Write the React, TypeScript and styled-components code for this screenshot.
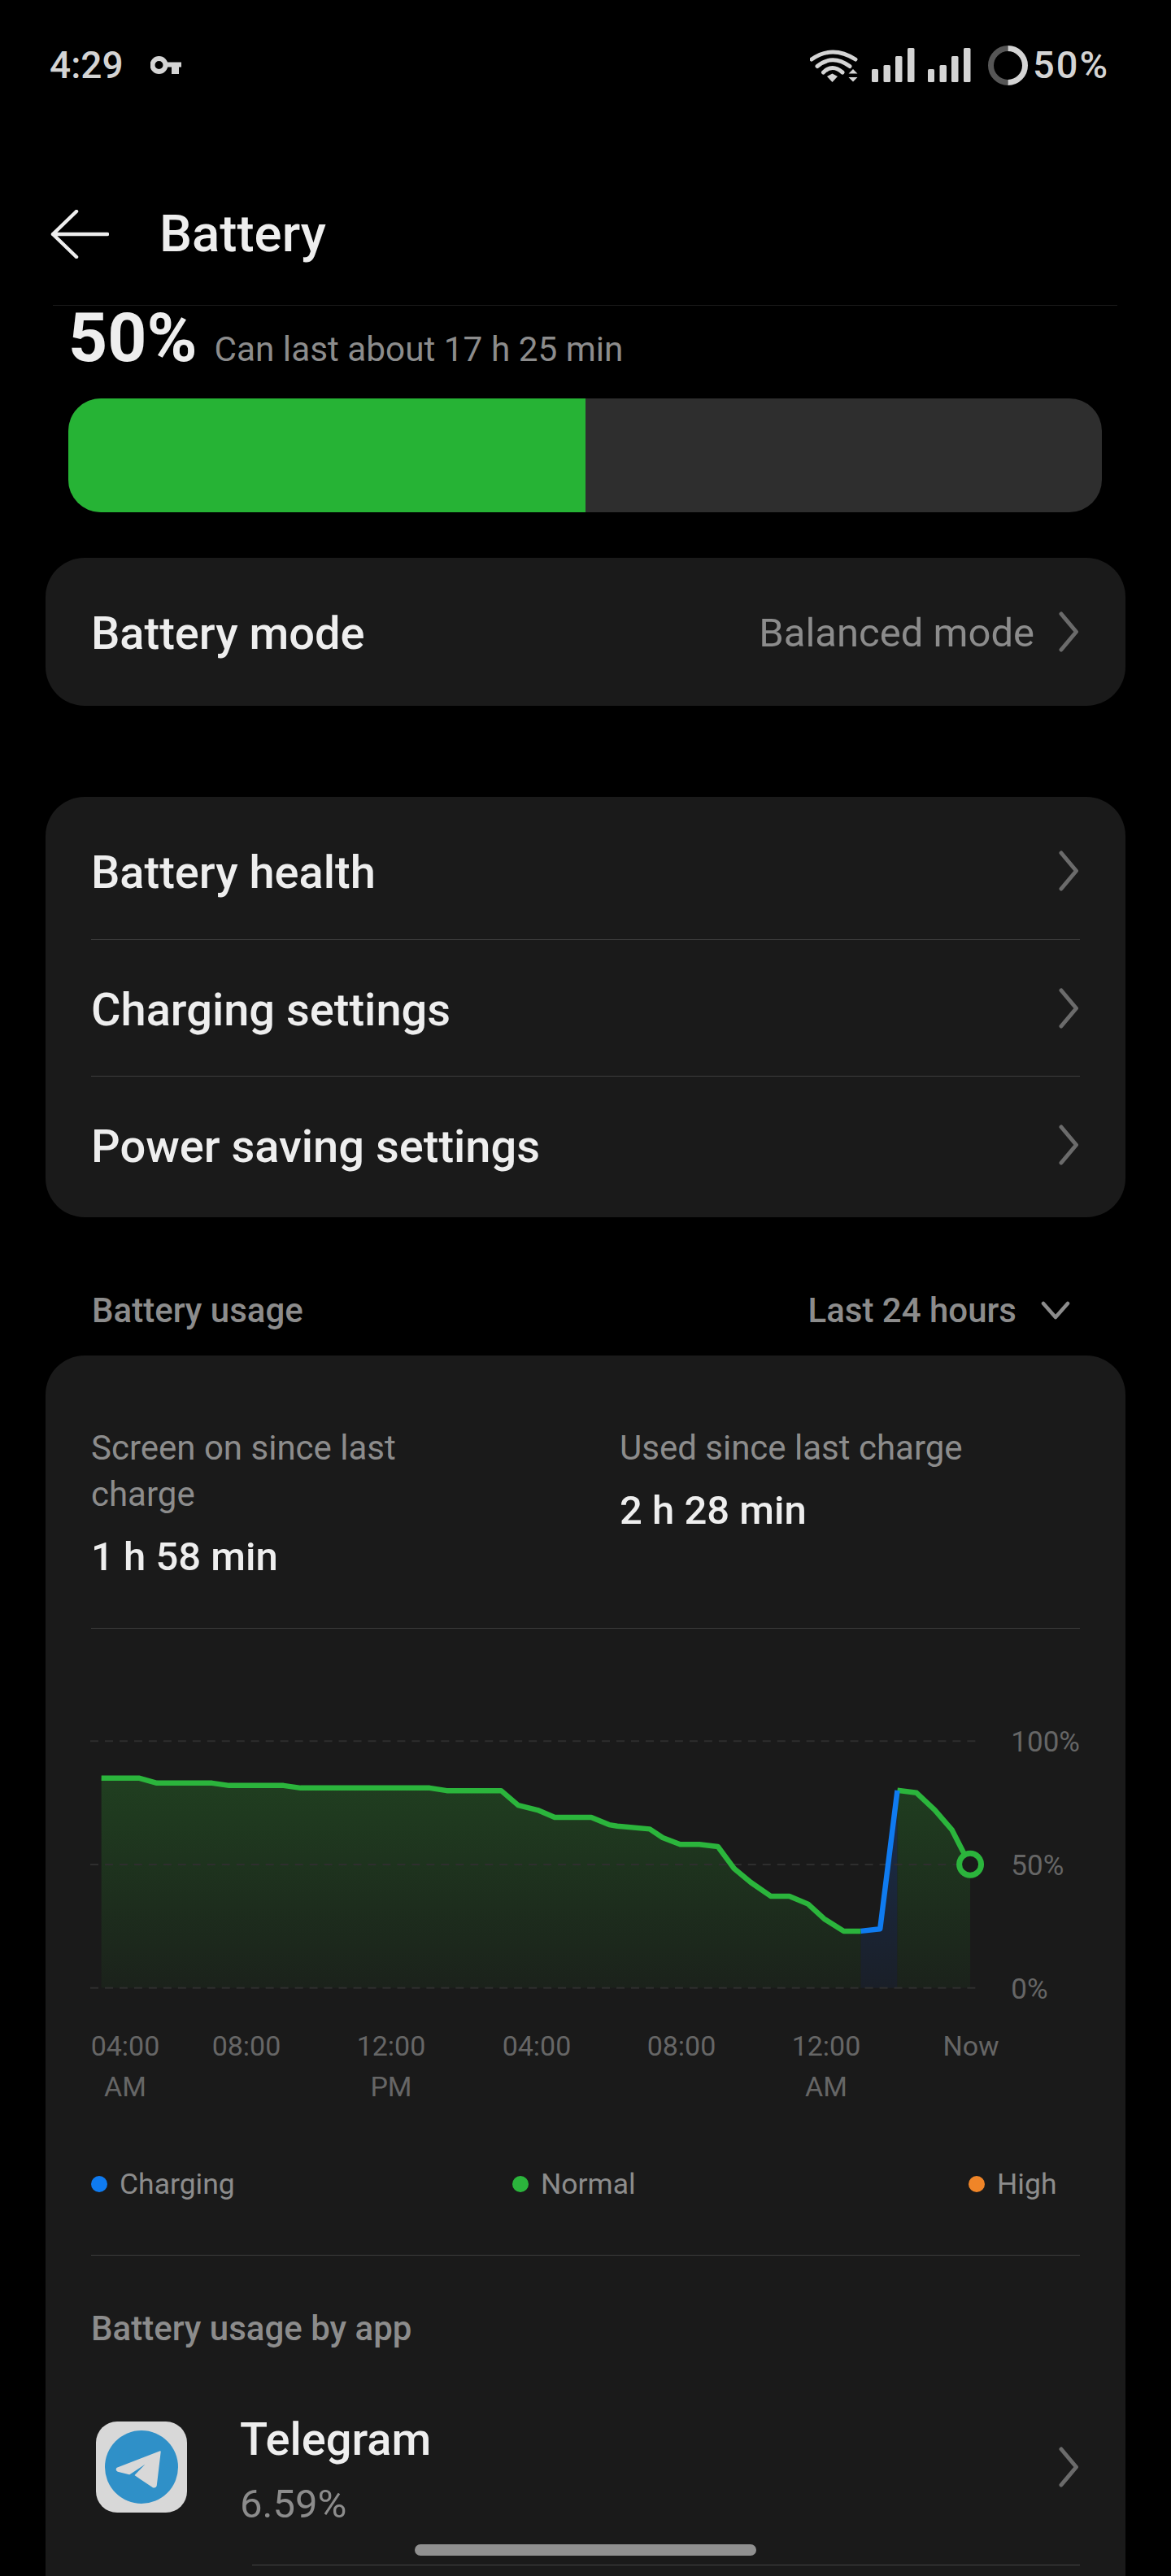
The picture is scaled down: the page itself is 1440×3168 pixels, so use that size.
import styled, { createGlobalStyle } from 'styled-components';

const GlobalStyle = createGlobalStyle`
  html, body { margin: 0; padding: 0; background: #000; }
  * { box-sizing: border-box; }
`;

const greenPts = [
  [124.7, 2186.7], [171.6, 2186.7], [193, 2192.7], [261, 2192.7], [282, 2195.7], [349, 2195.7],
  [370, 2198.7], [529, 2198.7], [550, 2202], [617, 2202], [638, 2220], [662, 2226], [683, 2235],
  [728, 2235], [750, 2244], [760, 2245.7], [800, 2249.3], [816, 2260], [837.5, 2268.3], [861, 2268.3],
  [884, 2271], [904, 2298], [924.5, 2315], [949, 2332], [972, 2332], [995, 2341.7], [1015, 2360],
  [1039, 2375], [1060, 2375],
];
const bluePts = [[1060, 2375], [1083.7, 2372.3], [1105, 2201.7]];
const afterPts = [[1105, 2201.7], [1128.6, 2204.7], [1151, 2225.7], [1172, 2250], [1185.7, 2276.7], [1194.7, 2292.7]];

const toLine = (pts: number[][]) => pts.map((p) => p.join(',')).join(' ');
const toArea = (pts: number[][]) =>
  `${pts[0][0]},2445 ${toLine(pts)} ${pts[pts.length - 1][0]},2445`;

const xTicks = [
  { w: 86, lines: ['04:00', 'AM'] },
  { w: 212, lines: ['08:00'] },
  { w: 144, lines: ['12:00', 'PM'] },
  { w: 214, lines: ['04:00'] },
  { w: 142, lines: ['08:00'] },
  { w: 214, lines: ['12:00', 'AM'] },
  { w: 142, lines: ['Now'] },
];

const Chevron = () => (
  <ChevronIcon viewBox="0 0 26 50">
    <path d="M3 3 L21.5 25 L3 47" fill="none" stroke="#6b6b6b" strokeWidth="5" strokeLinecap="round" strokeLinejoin="round" />
  </ChevronIcon>
);

const SignalBars = () => (
  <svg width="53" height="42" viewBox="0 0 53 42">
    <rect x="0" y="26" width="8" height="16" rx="1.5" fill="#d4d4d4" />
    <rect x="14.5" y="21" width="8.5" height="21" rx="1.5" fill="#d4d4d4" />
    <rect x="29" y="10" width="8.5" height="32" rx="1.5" fill="#d4d4d4" />
    <rect x="44" y="0" width="8.5" height="42" rx="1.5" fill="#d4d4d4" />
  </svg>
);

const App = () => {
  const level = 50;

  return (
    <Page>
      <GlobalStyle />
      <StatusBar>
        <StatusLeft>
          <Clock>4:29</Clock>
          <svg width="38" height="22" viewBox="0 0 38 22">
            <circle cx="10.5" cy="11" r="8" fill="none" stroke="#d4d4d4" strokeWidth="6" />
            <path d="M17 7.5 H38 V13.5 H35 V22 H26 V13.5 H17 Z" fill="#d4d4d4" />
          </svg>
        </StatusLeft>
        <StatusRight>
          <svg width="59" height="42" viewBox="0 0 59 42">
            <g fill="none" stroke="#d4d4d4" strokeWidth="5" strokeLinecap="round">
              <path d="M2 14 Q27.5 -4 56 14" />
              <path d="M9 22.5 Q27.5 7 49 22.5" />
              <path d="M16.5 30 Q27.5 19 40 30" />
            </g>
            <path d="M21 35 L27.5 31.5 L34 35 L27.5 42 Z" fill="#d4d4d4" />
            <path d="M47.5 31.5 L53 26 L58.5 31.5 Z M47.5 36 L58.5 36 L53 41.5 Z" fill="#d4d4d4" />
          </svg>
          <SignalGroup>
            <SignalBars />
            <SignalBars />
          </SignalGroup>
          <RingIcon width="49" height="49" viewBox="0 0 49 49">
            <path d="M24.5 3.5 A21 21 0 0 0 24.5 45.5" fill="none" stroke="#565656" strokeWidth="7" />
            <path d="M24.5 3.5 A21 21 0 0 1 24.5 45.5" fill="none" stroke="#d4d4d4" strokeWidth="7" />
          </RingIcon>
          <StatusPercent>50%</StatusPercent>
        </StatusRight>
      </StatusBar>

      <TopBar>
        <svg width="72" height="60" viewBox="0 0 72 60">
          <path d="M70 30 H3 M32 2 L3 30 L32 58" fill="none" stroke="#eee" strokeWidth="4.5" strokeLinecap="round" strokeLinejoin="round" />
        </svg>
        <Title>Battery</Title>
      </TopBar>
      <TopRule />

      <Summary>
        <BigPercent>50%</BigPercent>
        <Estimate>Can last about 17 h 25 min</Estimate>
      </Summary>
      <LevelBar>
        <LevelFill style={{ width: `${level}%` }} />
      </LevelBar>

      <ModeCard>
        <RowLabel>Battery mode</RowLabel>
        <RowEnd>
          <RowValue>Balanced mode</RowValue>
          <Chevron />
        </RowEnd>
      </ModeCard>

      <ListCard>
        <ListRow $first>
          <RowLabel>Battery health</RowLabel>
          <Chevron />
        </ListRow>
        <Divider />
        <ListRow>
          <RowLabel>Charging settings</RowLabel>
          <Chevron />
        </ListRow>
        <Divider />
        <ListRow>
          <RowLabel>Power saving settings</RowLabel>
          <Chevron />
        </ListRow>
      </ListCard>

      <SectionHead>
        <SectionTitle>Battery usage</SectionTitle>
        <RangePicker>
          Last 24 hours
          <svg width="36" height="26" viewBox="0 0 36 26">
            <path d="M3 4 L18 21 L33 4" fill="none" stroke="#8c8c8c" strokeWidth="4.5" strokeLinecap="round" strokeLinejoin="round" />
          </svg>
        </RangePicker>
      </SectionHead>

      <UsageCard>
        <StatsRow>
          <StatBlock>
            <StatLabel>Screen on since last<br />charge</StatLabel>
            <StatValue>1 h 58 min</StatValue>
          </StatBlock>
          <StatBlock>
            <StatLabel>Used since last charge</StatLabel>
            <StatValue>2 h 28 min</StatValue>
          </StatBlock>
        </StatsRow>
        <Divider />

        <ChartRow>
          <svg width="1104" height="354" viewBox="111 2118 1104 354">
            <defs>
              <linearGradient id="greenFill" gradientUnits="userSpaceOnUse" x1="0" y1="2186" x2="0" y2="2445">
                <stop offset="0" stopColor="#203f20" />
                <stop offset="1" stopColor="#1b221b" />
              </linearGradient>
              <linearGradient id="blueFill" gradientUnits="userSpaceOnUse" x1="0" y1="2186" x2="0" y2="2445">
                <stop offset="0" stopColor="#1a2f50" />
                <stop offset="1" stopColor="#1a1f28" />
              </linearGradient>
            </defs>
            <polygon points={toArea(greenPts)} fill="url(#greenFill)" />
            <polygon points={toArea(bluePts)} fill="url(#blueFill)" />
            <polygon points={toArea(afterPts)} fill="url(#greenFill)" />
            <g stroke="#2e2e2e" strokeWidth="2" strokeDasharray="10 8">
              <line x1="111" y1="2141" x2="1208" y2="2141" />
              <line x1="111" y1="2293" x2="1208" y2="2293" />
              <line x1="111" y1="2445" x2="1208" y2="2445" />
            </g>
            <g fill="none" strokeWidth="6.5" strokeLinejoin="round">
              <polyline points={toLine(greenPts)} stroke="#2bb53c" />
              <polyline points={toLine(afterPts)} stroke="#2bb53c" />
              <polyline points={toLine(bluePts)} stroke="#0f7bf0" />
            </g>
            <circle cx="1194.7" cy="2292.7" r="13.5" fill="#1a1a1a" stroke="#2bb53c" strokeWidth="7" />
          </svg>
          <YAxis>
            <span>100%</span>
            <span>50%</span>
            <span>0%</span>
          </YAxis>
        </ChartRow>

        <XAxis>
          {xTicks.map((tick, i) => (
            <XTick key={i} $w={tick.w}>
              {tick.lines.map((line) => (
                <div key={line}>{line}</div>
              ))}
            </XTick>
          ))}
        </XAxis>

        <Legend>
          <LegendItem><Dot $color="#0f7bf0" />Charging</LegendItem>
          <LegendItem><Dot $color="#2bb53c" />Normal</LegendItem>
          <LegendItem><Dot $color="#f08528" />High</LegendItem>
        </Legend>
        <LegendRule />

        <SectionTitle>Battery usage by app</SectionTitle>
        <AppRow>
          <AppIcon>
            <svg width="112" height="112" viewBox="0 0 112 112">
              <circle cx="56" cy="56" r="45" fill="#2f90c8" />
              <path
                d="M79 37 L26 57.5 Q24.5 60 27 61 L41 64.5 L66 48 L48.5 66 L70 80.5 Q73 81.5 74 79 Z"
                fill="#d8d8d8"
                stroke="#d8d8d8"
                strokeWidth="1.5"
                strokeLinejoin="round"
              />
            </svg>
          </AppIcon>
          <AppText>
            <AppName>Telegram</AppName>
            <AppShare>6.59%</AppShare>
          </AppText>
          <Chevron />
        </AppRow>
        <AppRule />
      </UsageCard>

      <HomeBar />
    </Page>
  );
};

const Page = styled.div`
  position: relative;
  width: 1440px;
  height: 3168px;
  overflow: hidden;
  background: #000;
  color: #eee;
  font-family: Roboto, "Noto Sans", sans-serif;
`;

const StatusBar = styled.div`
  display: flex;
  justify-content: space-between;
  align-items: center;
  height: 160px;
  padding: 0 76px 0 61px;
  color: #d4d4d4;
`;

const StatusLeft = styled.div`
  display: flex;
  align-items: center;
  gap: 33px;
`;

const Clock = styled.span`
  font-size: 46px;
  font-weight: 500;
  line-height: 60px;
`;

const StatusRight = styled.div`
  display: flex;
  align-items: center;
  gap: 10px;
`;

const SignalGroup = styled.div`
  display: flex;
  gap: 16px;
  margin-left: 7px;
`;

const RingIcon = styled.svg`
  margin-left: 11px;
`;

const StatusPercent = styled.span`
  margin-left: -4px;
  font-size: 47px;
  font-weight: 500;
  line-height: 60px;
  letter-spacing: 2px;
`;

const TopBar = styled.div`
  display: flex;
  align-items: center;
  gap: 62px;
  height: 215px;
  padding: 40px 0 0 62px;
`;

const Title = styled.h1`
  margin: 0;
  font-size: 63.5px;
  font-weight: 500;
  line-height: 80px;
  color: #eee;
`;

const TopRule = styled.div`
  height: 1px;
  margin: 0 66px 0 65px;
  background: #1a1a1a;
`;

const Summary = styled.div`
  display: flex;
  align-items: baseline;
  gap: 21px;
  padding: 0 84px;
  margin-bottom: 34px;
`;

const BigPercent = styled.span`
  font-size: 84px;
  font-weight: 700;
  line-height: 80px;
  color: #eee;
`;

const Estimate = styled.span`
  font-size: 42.3px;
  color: #8c8c8c;
`;

const LevelBar = styled.div`
  height: 140px;
  margin: 0 85px 0 84px;
  border-radius: 40px;
  background: #2e2e2e;
  overflow: hidden;
`;

const LevelFill = styled.div`
  height: 100%;
  background: #26b335;
`;

const Card = styled.div`
  margin: 0 56px;
  background: #1a1a1a;
  border-radius: 48px;
  padding: 0 56px;
`;

const ModeCard = styled(Card)`
  display: flex;
  justify-content: space-between;
  align-items: center;
  height: 182px;
  margin-top: 56px;
`;

const RowLabel = styled.span`
  padding-top: 4px;
  font-size: 56px;
  font-weight: 500;
  color: #eee;
`;

const RowEnd = styled.div`
  display: flex;
  align-items: center;
  gap: 30px;
`;

const RowValue = styled.span`
  padding-top: 2px;
  font-size: 49px;
  color: #8c8c8c;
`;

const ChevronIcon = styled.svg`
  width: 26px;
  height: 50px;
  flex: none;
`;

const ListCard = styled(Card)`
  margin-top: 112px;
  padding-top: 7px;
  padding-bottom: 6px;
`;

const ListRow = styled.div<{ $first?: boolean }>`
  display: flex;
  justify-content: space-between;
  align-items: center;
  height: ${(props) => (props.$first ? 168 : 167)}px;
`;

const Divider = styled.div`
  height: 1px;
  background: #3c3c3c;
`;

const SectionHead = styled.div`
  display: flex;
  justify-content: space-between;
  align-items: center;
  padding: 90px 124px 30px 113px;
`;

const SectionTitle = styled.div`
  font-size: 42px;
  font-weight: 500;
  line-height: 50px;
  color: #8c8c8c;
`;

const RangePicker = styled.div`
  display: flex;
  align-items: center;
  gap: 30px;
  font-size: 42px;
  font-weight: 500;
  line-height: 50px;
  color: #8c8c8c;
`;

const UsageCard = styled(Card)`
  padding-top: 85px;
  padding-bottom: 200px;
`;

const StatsRow = styled.div`
  display: grid;
  grid-template-columns: 650px 1fr;
  padding-bottom: 59px;
`;

const StatBlock = styled.div`
  display: flex;
  flex-direction: column;
`;

const StatLabel = styled.div`
  font-size: 42px;
  line-height: 57px;
  color: #8c8c8c;
`;

const StatValue = styled.div`
  margin-top: 21px;
  font-size: 49px;
  font-weight: 500;
  line-height: 56px;
  color: #eee;
`;

const ChartRow = styled.div`
  display: flex;
  height: 354px;
  margin: 115px 0 0 -1px;
`;

const YAxis = styled.div`
  display: flex;
  flex-direction: column;
  justify-content: space-between;
  margin-left: 30px;
  font-size: 35px;
  line-height: 50px;
  color: #666;
`;

const XAxis = styled.div`
  display: flex;
  height: 100px;
  margin: 19px 0 0 -1px;
`;

const XTick = styled.div<{ $w: number }>`
  width: ${(props) => props.$w}px;
  text-align: center;
  font-size: 34px;
  line-height: 50px;
  color: #666;
`;

const Legend = styled.div`
  display: grid;
  grid-template-columns: 518px 561px auto;
  margin-top: 70px;
`;

const LegendItem = styled.div`
  display: flex;
  align-items: center;
  gap: 15px;
  font-size: 35.5px;
  line-height: 50px;
  color: #8c8c8c;
`;

const Dot = styled.span<{ $color: string }>`
  width: 20px;
  height: 20px;
  border-radius: 50%;
  background: ${(props) => props.$color};
`;

const LegendRule = styled(Divider)`
  margin: 62px 0 65px;
`;

const AppRow = styled.div`
  display: flex;
  align-items: center;
  margin-top: 89px;
  padding-left: 6px;
  height: 112px;
`;

const AppIcon = styled.div`
  width: 112px;
  height: 112px;
  margin-right: 65px;
  border-radius: 26px;
  background: #d8d8d8;
  overflow: hidden;
  line-height: 0;
`;

const AppText = styled.div`
  flex: 1;
  padding-top: 5px;
`;

const AppName = styled.div`
  font-size: 56px;
  font-weight: 500;
  line-height: 68px;
  color: #eee;
`;

const AppShare = styled.div`
  margin-top: 19px;
  font-size: 49px;
  line-height: 54px;
  color: #8c8c8c;
`;

const AppRule = styled.div`
  height: 1px;
  margin: 64px 0 0 198px;
  background: #444;
`;

const HomeBar = styled.div`
  position: absolute;
  left: 510px;
  bottom: 25px;
  width: 420px;
  height: 14px;
  border-radius: 7px;
  background: #909090;
`;

export default App;
